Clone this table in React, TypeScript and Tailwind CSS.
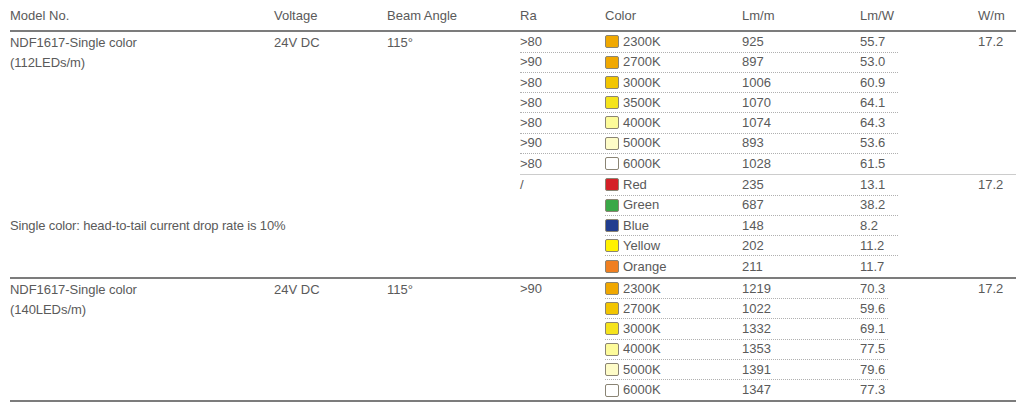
import React from "react";

type Row = [string, string, string, string, string, string?];

const group1: Row[] = [
  [">80", "#f0a800", "2300K", "925", "55.7", "17.2"],
  [">90", "#f0a800", "2700K", "897", "53.0"],
  [">80", "#f2c500", "3000K", "1006", "60.9"],
  [">80", "#f5e31c", "3500K", "1070", "64.1"],
  [">80", "#fdfb9a", "4000K", "1074", "64.3"],
  [">90", "#fefcc8", "5000K", "893", "53.6"],
  [">80", "#ffffff", "6000K", "1028", "61.5"],
];

const group2: Row[] = [
  ["/", "#d42027", "Red", "235", "13.1", "17.2"],
  ["", "#3aa847", "Green", "687", "38.2"],
  ["", "#213d8f", "Blue", "148", "8.2"],
  ["", "#fff200", "Yellow", "202", "11.2"],
  ["", "#f07f20", "Orange", "211", "11.7"],
];

const group3: Row[] = [
  [">90", "#f0a800", "2300K", "1219", "70.3", "17.2"],
  ["", "#f2c500", "2700K", "1022", "59.6"],
  ["", "#f5e31c", "3000K", "1332", "69.1"],
  ["", "#fdfb9a", "4000K", "1353", "77.5"],
  ["", "#fefcc8", "5000K", "1391", "79.6"],
  ["", "#ffffff", "6000K", "1347", "77.3"],
];

function DataRow({ row, line }: { row: Row; line: string | null }) {
  const [ra, color, label, lm, lmw, wm] = row;
  return (
    <div className="h-[20.3px] flex flex-col">
      <div className="flex-1 flex items-center">
        <div className="w-[85px]">{ra}</div>
        <div className="w-[137px] flex items-center">
          <span
            className="w-[14px] h-[13px] rounded-[2px] border border-[#8a8474] mr-[4px] shrink-0"
            style={{ backgroundColor: color }}
          />
          <span>{label}</span>
        </div>
        <div className="w-[118px]">{lm}</div>
        <div className="w-[118px]">{lmw}</div>
        <div className="flex-1">{wm ?? ""}</div>
      </div>
      {line && <div className={`h-0 border-t border-dotted border-[#b0b0b0] ${line}`} />}
    </div>
  );
}

function Group({ rows, line }: { rows: Row[]; line: string }) {
  return (
    <div className="flex flex-col">
      {rows.map((r, i) => (
        <DataRow key={i} row={r} line={i < rows.length - 1 ? line : null} />
      ))}
    </div>
  );
}

export default function App() {
  return (
    <div
      className="w-[1024px] h-[406px] bg-white text-[13px] text-[#5a5a5a] pl-[10px]"
      style={{ fontFamily: '"Liberation Sans", Arial, sans-serif' }}
    >
      <div className="w-[1006px]">
        {/* header */}
        <div className="h-[32px] pt-[1px] flex items-center border-b-2 border-[#7c7c7c]">
          <div className="w-[264px]">Model No.</div>
          <div className="w-[113px]">Voltage</div>
          <div className="w-[133px]">Beam Angle</div>
          <div className="w-[85px]">Ra</div>
          <div className="w-[137px]">Color</div>
          <div className="w-[118px]">Lm/m</div>
          <div className="w-[118px]">Lm/W</div>
          <div className="flex-1">W/m</div>
        </div>

        {/* section A */}
        <div className="flex border-b-2 border-[#7c7c7c]">
          <div className="w-[510px] flex flex-col">
            <div className="h-[142px] flex pt-[1px]">
              <div className="w-[264px] leading-[20px] tracking-[-0.05px]">
                NDF1617-Single color
                <br />
                (112LEDs/m)
              </div>
              <div className="w-[113px] leading-[20px]">24V DC</div>
              <div className="w-[133px] leading-[20px]">115°</div>
            </div>
            <div className="flex-1 flex items-center tracking-[-0.14px]">
              Single color: head-to-tail current drop rate is 10%
            </div>
          </div>
          <div className="flex-1 flex flex-col">
            <Group rows={group1} line="w-[378px]" />
            <div className="border-t border-[#cccccc]" />
            <Group rows={group2} line="ml-[85px] w-[293px]" />
          </div>
        </div>

        {/* section B */}
        <div className="flex border-b-2 border-[#7c7c7c]">
          <div className="w-[510px] flex pt-[1px]">
            <div className="w-[264px] leading-[20px] tracking-[-0.05px]">
              NDF1617-Single color
              <br />
              (140LEDs/m)
            </div>
            <div className="w-[113px] leading-[20px]">24V DC</div>
            <div className="w-[133px] leading-[20px]">115°</div>
          </div>
          <div className="flex-1 flex flex-col">
            <Group rows={group3} line="ml-[85px] w-[283px]" />
          </div>
        </div>
      </div>
    </div>
  );
}
